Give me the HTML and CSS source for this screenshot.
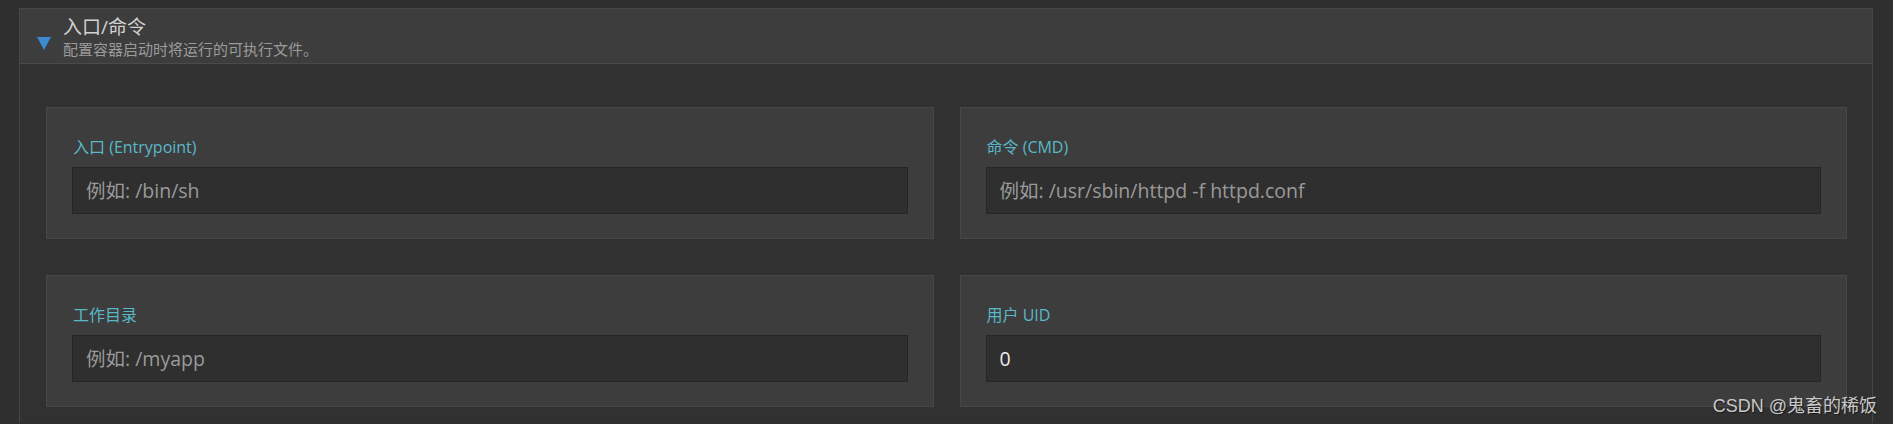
FILE: index.html
```html
<!DOCTYPE html>
<html lang="zh-CN">
<head>
<meta charset="utf-8">
<title>入口/命令</title>
<link rel="stylesheet" href="styles.css">
</head>
<body>
<section class="panel">
  <header class="panel-head">
    <span class="caret"></span>
    <div class="head-text">
      <div class="title">入口/命令</div>
      <div class="subtitle">配置容器启动时将运行的可执行文件。</div>
    </div>
  </header>
  <div class="panel-body">
    <div class="field">
      <label class="label">入口 (Entrypoint)</label>
      <input class="input" type="text" placeholder="例如: /bin/sh">
    </div>
    <div class="field">
      <label class="label">命令 (CMD)</label>
      <input class="input" type="text" placeholder="例如: /usr/sbin/httpd -f httpd.conf">
    </div>
    <div class="field">
      <label class="label">工作目录</label>
      <input class="input" type="text" placeholder="例如: /myapp">
    </div>
    <div class="field">
      <label class="label">用户 UID</label>
      <input class="input" type="text" value="0">
    </div>
  </div>
</section>
<div class="watermark">CSDN @鬼畜的稀饭</div>
</body>
</html>
```

FILE: styles.css
```css
html, body {
  margin: 0;
  padding: 0;
  height: 100%;
  overflow: hidden;
}
body {
  background: #2f2f2f;
  font-family: "Open Sans", "Noto Sans CJK SC", sans-serif;
  position: relative;
}
.panel {
  margin: 8px 20px 0 19px;
  border: 1px solid #474747;
  border-bottom: none;
  background: #313131;
}
.panel-head {
  display: flex;
  align-items: flex-start;
  background: #3d3d3d;
  border-bottom: 1px solid #4a4a4a;
  padding: 7px 0 5px 17px;
}
.caret {
  width: 0;
  height: 0;
  margin-top: 21px;
  margin-right: 12px;
  border-left: 7.5px solid transparent;
  border-right: 7.5px solid transparent;
  border-top: 13px solid #3a8bd2;
}
.head-text {
  display: flex;
  flex-direction: column;
}
.title {
  font-size: 19px;
  line-height: 22px;
  color: #d2d2d2;
}
.subtitle {
  margin-top: 2px;
  font-size: 15px;
  line-height: 18px;
  color: #9b9b9b;
}
.panel-body {
  display: grid;
  grid-template-columns: 1fr 1fr;
  column-gap: 26px;
  row-gap: 36px;
  padding: 43px 25px 16px 26px;
}
.field {
  display: flex;
  flex-direction: column;
  background: #3d3d3d;
  border: 1px solid #474747;
  padding: 29px 25px 24px;
}
.label {
  font-size: 16px;
  line-height: 20px;
  color: #5ab8c8;
  padding-left: 1px;
  margin-bottom: 10px;
}
.input {
  box-sizing: border-box;
  height: 47px;
  width: 100%;
  margin: 0;
  background: #2f2f2f;
  border: 1px solid #262626;
  padding: 0 13px;
  font-family: "Open Sans", "Noto Sans CJK SC", sans-serif;
  font-size: 19.5px;
  color: #ececec;
  outline: none;
}
.input::placeholder {
  color: #9a9a9a;
  opacity: 1;
}
.watermark {
  position: absolute;
  right: 16px;
  top: 391px;
  font-family: "Liberation Sans", "Noto Sans CJK SC", sans-serif;
  font-size: 18px;
  color: #c9c9c9;
  text-shadow: 1px 1px 1px #1a1a1a;
}
```
